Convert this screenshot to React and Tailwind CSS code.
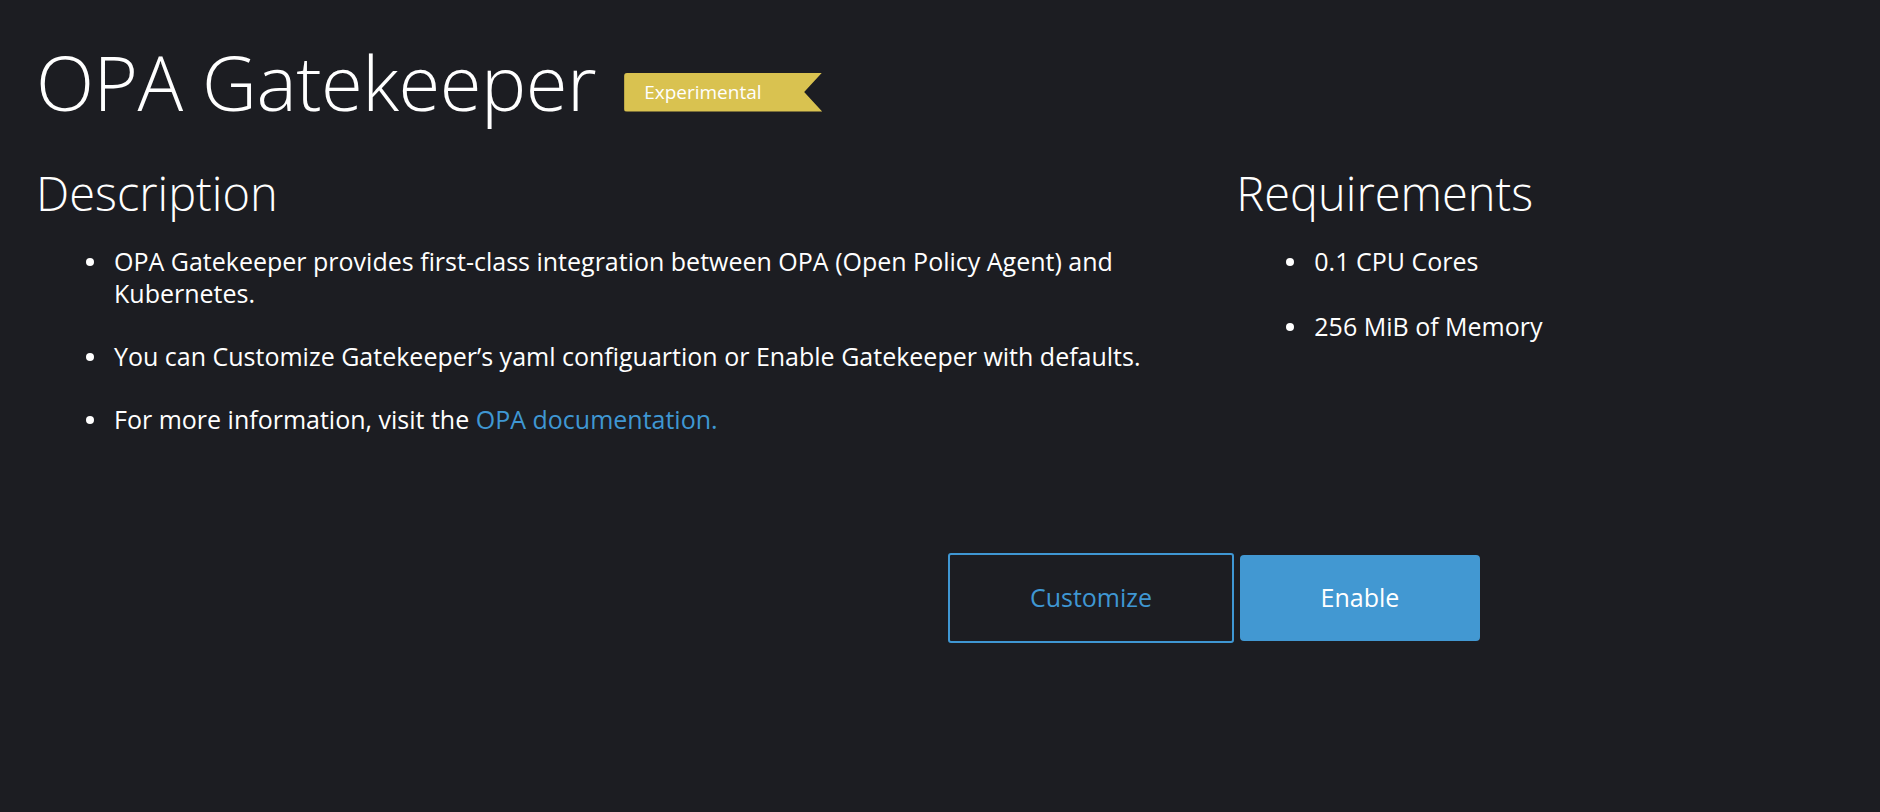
import React from "react";

function Bullet({ children }) {
  return (
    <li className="flex items-start">
      <span className="mt-[13px] h-[8px] w-[8px] shrink-0 rounded-full bg-white" />
      <span className="ml-[20px]">{children}</span>
    </li>
  );
}

export default function App() {
  return (
    <div
      className="min-h-screen w-full bg-[#1c1d22] px-[36px] pt-[44px] text-white"
      style={{ fontFamily: '"Open Sans", "Noto Sans", sans-serif' }}
    >
      <div className="flex items-center">
        <h1 className="text-[76px] font-light leading-none tracking-[-0.5px]">OPA Gatekeeper</h1>
        <span className="ml-[28px] mt-[20px] flex h-[39px] w-[198px] items-center rounded-l-[3px] bg-[#d9c250] pl-[20px] text-[19px] text-white [clip-path:polygon(0_0,100%_0,calc(100%-18px)_50%,100%_100%,0_100%)]">
          Experimental
        </span>
      </div>

      <div className="mt-[50px] grid grid-cols-3">
        <div className="col-span-2">
          <h2 className="text-[47px] font-light leading-none">Description</h2>
          <ul className="mt-[28px] flex flex-col gap-[31px] pl-[50px] text-[25px] font-medium leading-[32px]">
            <Bullet>
              OPA Gatekeeper provides first-class integration between OPA (Open Policy Agent) and
              <br />
              Kubernetes.
            </Bullet>
            <Bullet>You can Customize Gatekeeper’s yaml configuartion or Enable Gatekeeper with defaults.</Bullet>
            <Bullet>
              For more information, visit the{" "}
              <a className="text-[#3f97d3]" href="#">
                OPA documentation.
              </a>
            </Bullet>
          </ul>
        </div>
        <div className="-ml-[5px]">
          <h2 className="text-[47px] font-light leading-none">Requirements</h2>
          <ul className="mt-[28px] flex flex-col gap-[33px] pl-[50px] text-[25px] font-medium leading-[32px]">
            <Bullet>0.1 CPU Cores</Bullet>
            <Bullet>256 MiB of Memory</Bullet>
          </ul>
        </div>
      </div>

      <div className="mt-[118px] flex items-center justify-end gap-[6px] pr-[364px]">
        <button className="flex h-[90px] w-[286px] items-center justify-center rounded-[3px] border-2 border-[#3f97d3] text-[25px] font-medium text-[#3f97d3]">
          Customize
        </button>
        <button className="flex h-[86px] w-[240px] items-center justify-center rounded-[4px] bg-[#4298d2] text-[25px] font-medium text-white">
          Enable
        </button>
      </div>
    </div>
  );
}
